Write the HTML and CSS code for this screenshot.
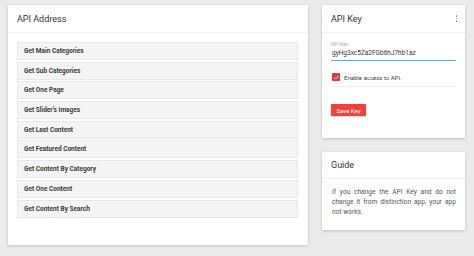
FILE: index.html
```html
<!DOCTYPE html>
<html>
<head>
<meta charset="utf-8">
<link rel="stylesheet" href="styles.css">
</head>
<body>
<div class="layout">
  <section class="card card-main">
    <div class="card-head"><h2 class="card-title">API Address</h2></div>
    <div class="card-body list">
      <div class="item">Get Main Categories</div>
      <div class="item">Get Sub Categories</div>
      <div class="item">Get One Page</div>
      <div class="item">Get Slider's Images</div>
      <div class="item">Get Last Content</div>
      <div class="item">Get Featured Content</div>
      <div class="item">Get Content By Category</div>
      <div class="item">Get One Content</div>
      <div class="item">Get Content By Search</div>
    </div>
  </section>
  <div class="side">
    <section class="card card-key">
      <div class="card-head head-row">
        <h2 class="card-title">API Key</h2>
        <span class="kebab"><i></i><i></i><i></i></span>
      </div>
      <div class="card-body key-body">
        <label class="field-label">API Key</label>
        <div class="field-value">gyHg3xc5Za2FGb6hJ7hb1az</div>
        <div class="check-row">
          <span class="checkbox"><svg viewBox="0 0 10 10" width="7" height="7"><path d="M2 5.2 L4.1 7.2 L8 2.8" fill="none" stroke="#fff" stroke-width="1.4"/></svg></span>
          <span class="check-text">Enable access to API.</span>
        </div>
        <button class="btn">Save Key</button>
      </div>
    </section>
    <section class="card card-guide">
      <div class="card-head"><h2 class="card-title">Guide</h2></div>
      <p class="guide-text">If you change the API Key and do not change it from distinction app, your app not works.</p>
    </section>
  </div>
</div>
</body>
</html>
```
FILE: styles.css
```css
* { box-sizing: border-box; }
html, body { margin: 0; }
body {
  background: #ebebeb;
  font-family: Roboto, "Liberation Sans", Arial, sans-serif;
  color: #333;
  width: 474px;
  height: 256px;
  overflow: hidden;
}
.layout {
  display: flex;
  gap: 14px;
  padding: 5px 8px 0 8px;
}
.card {
  background: #fff;
  box-shadow: 0 1px 3px rgba(0,0,0,0.18);
}
.card-main { width: 300px; height: 240px; }
.card-head {
  height: 28px;
  border-bottom: 1px solid #f1f1f1;
  padding: 0 10px 0 9px;
  display: flex;
  align-items: center;
}
.card-title {
  margin: 0;
  font-size: 9px;
  font-weight: 400;
  color: #333;
}
.list { padding: 9px 10px 0 9px; display: flex; flex-direction: column; gap: 1.7px; }
.item {
  height: 18px;
  background: #f4f4f4;
  border: 1px solid #e8e8e8;
  display: flex;
  align-items: center;
  padding-left: 6px;
  font-size: 6.5px;
  font-weight: 700;
  color: #3a3a3a;
}
.side { width: 143px; display: flex; flex-direction: column; gap: 14px; }
.card-key { height: 133px; }
.head-row { justify-content: space-between; padding-right: 8px; }
.kebab { display: flex; flex-direction: column; gap: 1px; }
.kebab i { width: 1.4px; height: 1.4px; background: #888; border-radius: 50%; display: block; }
.key-body { padding: 8px 9px 0 9px; }
.field-label { display: block; font-size: 5px; color: #aaa; line-height: 6px; }
.field-value {
  font-size: 6.5px;
  color: #333;
  padding: 2px 0 2px 1px;
  border-bottom: 1.5px solid #6ea6d6;
  line-height: 9px;
}
.check-row {
  display: flex;
  align-items: center;
  gap: 4px;
  margin-top: 12px;
  padding: 0 0 5px 1px;
  border-bottom: 1px solid #eeeeee;
}
.checkbox {
  width: 8px; height: 8px;
  background: #e53935;
  border-radius: 1px;
  display: flex; align-items: center; justify-content: center;
}
.check-text { font-size: 6px; color: #444; }
.btn {
  margin-top: 17px;
  background: #f0413a;
  color: #fff;
  border: 0;
  border-radius: 1px;
  font-family: inherit;
  font-size: 6px;
  height: 12px;
  width: 35px;
  padding: 0;
  box-shadow: 0 1px 2px rgba(0,0,0,0.2);
}
.card-guide { height: 78px; }
.card-guide .card-head { height: 27px; }
.guide-text {
  margin: 0;
  padding: 8px 9px 0 10px;
  font-size: 6.6px;
  line-height: 10px;
  text-align: justify;
  color: #555;
}
```
